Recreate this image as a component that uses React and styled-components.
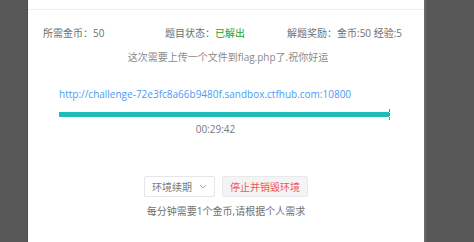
import React from "react";
import styled, { createGlobalStyle } from "styled-components";

const GlobalStyle = createGlobalStyle`
  html, body {
    margin: 0;
    padding: 0;
    background: #555;
    font-family: "Segoe UI", "Open Sans", "Noto Sans CJK SC", sans-serif;
  }
`;

const Page = styled.div`
  display: flex;
  width: 474px;
  height: 242px;
  overflow: hidden;
  background: #565656;
`;

const Overlay = styled.div`
  width: ${(p) => p.w}px;
  flex-shrink: 0;
  background: #575757;
  border-left: ${(p) => (p.edge ? "2px solid #6a6a6a" : "none")};
  box-shadow: ${(p) => (p.edge ? "none" : "inset -1px 0 0 #4e4e4e")};
`;

const Modal = styled.div`
  width: 396px;
  flex-shrink: 0;
  background: #fff;
  display: flex;
  flex-direction: column;
  color: #6e6e6e;
  font-size: 10px;
`;

const Header = styled.div`
  height: 9px;
  border-bottom: 1px solid #ebeef5;
`;

const InfoRow = styled.div`
  display: grid;
  grid-template-columns: repeat(3, 1fr);
  padding: 16px 15px 0;
  line-height: 14px;
`;

const Solved = styled.span`
  color: #1e9e1e;
`;

const Hint = styled.div`
  text-align: center;
  margin-top: 10px;
  line-height: 14px;
  color: #8a8a8a;
  padding-left: 4px;
`;

const Body = styled.div`
  padding: 23px 34px 0 31px;
  display: flex;
  flex-direction: column;
`;

const Link = styled.a`
  color: #4b9bf5;
  text-decoration: none;
  line-height: 14px;
`;

const Track = styled.div`
  position: relative;
  margin-top: 11px;
  height: 5px;
  width: 330px;
  background: #1fbdb9;
`;

const Tick = styled.div`
  position: absolute;
  right: -1px;
  top: -3px;
  height: 11px;
  border-right: 1px dashed #2aa7a3;
`;

const Timer = styled.div`
  text-align: center;
  line-height: 14px;
  margin-top: 5px;
  padding-right: 18px;
  color: #777;
`;

const Actions = styled.div`
  display: flex;
  justify-content: center;
  gap: 7px;
  margin-top: 40px;
`;

const Button = styled.button`
  height: 21px;
  padding: 0 7px;
  border: 1px solid ${(p) => (p.danger ? "#e9e9eb" : "#e4e6ea")};
  background: ${(p) => (p.danger ? "#f4f4f5" : "#fff")};
  color: ${(p) => (p.danger ? "#f05656" : "#7a7a7a")};
  border-radius: 2px;
  font-family: inherit;
  font-size: 10px;
  display: flex;
  align-items: center;
  gap: 7px;
`;

const Note = styled.div`
  text-align: center;
  margin-top: 7px;
  line-height: 14px;
  color: #707070;
`;

export default function App() {
  return (
    <>
      <GlobalStyle />
      <Page>
        <Overlay w={28} />
        <Modal>
          <Header />
          <InfoRow>
            <span>所需金币：50</span>
            <span>
              题目状态：<Solved>已解出</Solved>
            </span>
            <span>解题奖励：金币:50 经验:5</span>
          </InfoRow>
          <Hint>这次需要上传一个文件到flag.php了.祝你好运</Hint>
          <Body>
            <Link href="#">http://challenge-72e3fc8a66b9480f.sandbox.ctfhub.com:10800</Link>
            <Track>
              <Tick />
            </Track>
            <Timer>00:29:42</Timer>
          </Body>
          <Actions>
            <Button>
              环境续期
              <svg width="8" height="5" viewBox="0 0 8 5" fill="none">
                <path d="M1 1l3 3 3-3" stroke="#aaa" strokeWidth="1" />
              </svg>
            </Button>
            <Button danger>停止并销毁环境</Button>
          </Actions>
          <Note>每分钟需要1个金币,请根据个人需求</Note>
        </Modal>
        <Overlay w={50} edge />
      </Page>
    </>
  );
}
